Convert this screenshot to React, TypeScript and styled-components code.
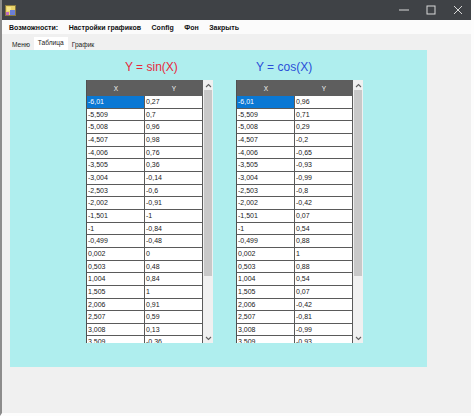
import React from "react";
import styled, { createGlobalStyle } from "styled-components";

const GlobalStyle = createGlobalStyle`
  html, body {
    margin: 0;
    padding: 0;
    background: #f0f0f0;
  }
  body {
    font-family: "Liberation Sans", Arial, sans-serif;
  }
`;

type Row = { x: string; y: string };

const xs = [
  "-6,01", "-5,509", "-5,008", "-4,507", "-4,006", "-3,505", "-3,004",
  "-2,503", "-2,002", "-1,501", "-1", "-0,499", "0,002", "0,503", "1,004",
  "1,505", "2,006", "2,507", "3,008", "3,509",
];
const sinYs = [
  "0,27", "0,7", "0,96", "0,98", "0,76", "0,36", "-0,14", "-0,6", "-0,91",
  "-1", "-0,84", "-0,48", "0", "0,48", "0,84", "1", "0,91", "0,59", "0,13",
  "-0,36",
];
const cosYs = [
  "0,96", "0,71", "0,29", "-0,2", "-0,65", "-0,93", "-0,99", "-0,8", "-0,42",
  "0,07", "0,54", "0,88", "1", "0,88", "0,54", "0,07", "-0,42", "-0,81",
  "-0,99", "-0,93",
];

const sinRows: Row[] = xs.map((x, i) => ({ x, y: sinYs[i] }));
const cosRows: Row[] = xs.map((x, i) => ({ x, y: cosYs[i] }));

function DataGrid({ rows }: { rows: Row[] }) {
  return (
    <GridFrame>
      <GridBody>
        <HeaderRow>
          <HeaderCell>X</HeaderCell>
          <HeaderCell>Y</HeaderCell>
        </HeaderRow>
        {rows.map((r, i) => (
          <DataRow key={i}>
            <Cell $selected={i === 0}>{r.x}</Cell>
            <Cell>{r.y}</Cell>
          </DataRow>
        ))}
      </GridBody>
      <ScrollBar>
        <ScrollArrow>
          <svg width="7" height="5" viewBox="0 0 7 5">
            <path d="M1 4 L3.5 1.5 L6 4" fill="none" stroke="#606060" strokeWidth="1.1" />
          </svg>
        </ScrollArrow>
        <ScrollThumb />
        <ScrollTrack />
        <ScrollArrow>
          <svg width="7" height="5" viewBox="0 0 7 5">
            <path d="M1 1 L3.5 3.5 L6 1" fill="none" stroke="#606060" strokeWidth="1.1" />
          </svg>
        </ScrollArrow>
      </ScrollBar>
    </GridFrame>
  );
}

export default function App() {
  return (
    <>
      <GlobalStyle />
      <Window>
        <TitleBar>
          <AppIcon>
            <svg width="11" height="11" viewBox="0 0 11 11">
              <rect x="0.5" y="0.5" width="10" height="10" fill="#e9d36a" stroke="#8a7a40" />
              <rect x="2" y="2" width="4" height="4" fill="#f6e58a" />
              <rect x="5" y="5" width="5" height="5" fill="#6b7fd6" />
              <rect x="1" y="7" width="3" height="3" fill="#c06ac0" />
            </svg>
          </AppIcon>
          <Controls>
            <ControlButton>
              <svg width="10" height="10" viewBox="0 0 10 10">
                <path d="M0 5 H10" stroke="#d8d8d8" strokeWidth="1" />
              </svg>
            </ControlButton>
            <ControlButton>
              <svg width="10" height="10" viewBox="0 0 10 10">
                <rect x="1" y="1" width="8" height="8" fill="none" stroke="#d8d8d8" strokeWidth="1" />
              </svg>
            </ControlButton>
            <ControlButton>
              <svg width="10" height="10" viewBox="0 0 10 10">
                <path d="M1 1 L9 9 M9 1 L1 9" stroke="#d8d8d8" strokeWidth="1" />
              </svg>
            </ControlButton>
          </Controls>
        </TitleBar>

        <MenuBar>
          <MenuItem>Возможности:</MenuItem>
          <MenuItem>Настройки графиков</MenuItem>
          <MenuItem>Config</MenuItem>
          <MenuItem>Фон</MenuItem>
          <MenuItem>Закрыть</MenuItem>
        </MenuBar>

        <TabStrip>
          <Tab>Меню</Tab>
          <Tab $active>Таблица</Tab>
          <Tab>График</Tab>
        </TabStrip>

        <TabPanel>
          <Tables>
            <TableColumn>
              <ChartTitle $color="#e8283c" $offset={39}>Y = sin(X)</ChartTitle>
              <DataGrid rows={sinRows} />
            </TableColumn>
            <TableColumn>
              <ChartTitle $color="#2a4fd8" $offset={20}>Y = cos(X)</ChartTitle>
              <DataGrid rows={cosRows} />
            </TableColumn>
          </Tables>
        </TabPanel>
      </Window>
    </>
  );
}

//@ styled ////////////////////////////////////////
const Window = styled.div`
  width: 474px;
  height: 416px;
  box-sizing: border-box;
  background: #f0f0f0;
  border-left: 2px solid #8c8c8c;
  border-right: 3px solid #fdfdfd;
  border-bottom: 3px solid #fdfdfd;
  display: flex;
  flex-direction: column;
  overflow: hidden;
`;

const TitleBar = styled.div`
  height: 20px;
  background: #3f4246;
  display: flex;
  align-items: center;
  justify-content: space-between;
  padding-left: 3px;
`;

const AppIcon = styled.div`
  display: flex;
  align-items: center;
`;

const Controls = styled.div`
  display: flex;
  align-items: center;
  height: 100%;
`;

const ControlButton = styled.div`
  width: 27px;
  height: 100%;
  display: flex;
  align-items: center;
  justify-content: center;
`;

const MenuBar = styled.div`
  height: 14px;
  background: #fbfbfb;
  display: flex;
  align-items: center;
  padding-left: 2px;
`;

const MenuItem = styled.span`
  font-size: 7px;
  font-weight: bold;
  color: #111;
  padding: 0 5.5px 0 5px;
  white-space: nowrap;
`;

const TabStrip = styled.div`
  height: 16px;
  display: flex;
  align-items: flex-end;
  padding-left: 8px;
`;

const Tab = styled.div<{ $active?: boolean }>`
  font-size: 6.6px;
  color: #222;
  height: ${({ $active }) => ($active ? "13px" : "11px")};
  line-height: 11px;
  padding: 0 ${({ $active }) => ($active ? "4px" : "2px")};
  background: ${({ $active }) => ($active ? "#ffffff" : "transparent")};
  margin-right: 2px;
  white-space: nowrap;
`;

const TabPanel = styled.div`
  margin-left: 8px;
  width: 417px;
  height: 317px;
  background: #afeeee;
  box-sizing: border-box;
  padding-top: 10px;
`;

const Tables = styled.div`
  display: flex;
  gap: 23px;
  padding-left: 76px;
`;

const TableColumn = styled.div`
  display: flex;
  flex-direction: column;
  gap: 6px;
`;

const ChartTitle = styled.div<{ $color: string; $offset: number }>`
  color: ${({ $color }) => $color};
  font-family: "Liberation Sans", Arial, sans-serif;
  font-size: 12px;
  height: 14px;
  line-height: 14px;
  padding-left: ${({ $offset }) => $offset}px;
`;

const GridFrame = styled.div`
  display: flex;
  height: 263px;
  background: #f0f0f0;
`;

const GridBody = styled.div`
  width: 117px;
  height: 100%;
  overflow: hidden;
  background: #ffffff;
  border-left: 1px solid #505050;
  box-sizing: border-box;
`;

const HeaderRow = styled.div`
  display: grid;
  grid-template-columns: 58px 58px;
  height: 16px;
  background: #5e5e5e;
`;

const HeaderCell = styled.div`
  color: #f4f4f4;
  font-size: 6.5px;
  display: flex;
  align-items: center;
  justify-content: center;
`;

const DataRow = styled.div`
  display: grid;
  grid-template-columns: 58px 58px;
  height: 12.67px;
  box-sizing: border-box;
  border-bottom: 1px solid #5a5a5a;
`;

const Cell = styled.div<{ $selected?: boolean }>`
  font-size: 7px;
  line-height: 11.67px;
  padding-left: 1px;
  color: ${({ $selected }) => ($selected ? "#ffffff" : "#1a1a1a")};
  background: ${({ $selected }) => ($selected ? "#0a78d4" : "#ffffff")};
  border-right: 1px solid #5a5a5a;
  white-space: nowrap;
  overflow: hidden;
`;

const ScrollBar = styled.div`
  width: 10px;
  display: flex;
  flex-direction: column;
  background: #f0f0f0;
`;

const ScrollArrow = styled.div`
  height: 10px;
  display: flex;
  align-items: center;
  justify-content: center;
`;

const ScrollThumb = styled.div`
  height: 186px;
  margin: 0 1px;
  background: #c8c8c8;
`;

const ScrollTrack = styled.div`
  flex: 1;
`;
